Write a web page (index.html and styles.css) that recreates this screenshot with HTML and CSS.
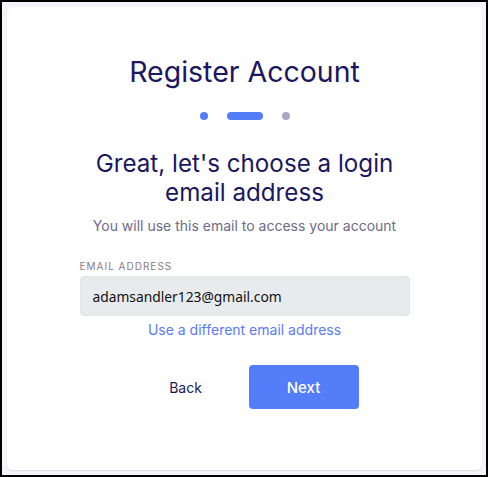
FILE: index.html
```html
<!DOCTYPE html>
<html>
<head>
<meta charset="utf-8">
<link rel="stylesheet" href="styles.css">
</head>
<body>
<div class="frame">
  <div class="card">
    <h1 class="title">Register Account</h1>
    <div class="steps">
      <span class="dot dot-done"></span>
      <span class="bar"></span>
      <span class="dot dot-todo"></span>
    </div>
    <h2 class="heading">Great, let's choose a login email address</h2>
    <p class="desc">You will use this email to access your account</p>
    <div class="field">
      <label class="label">EMAIL ADDRESS</label>
      <div class="input">adamsandler123@gmail.com</div>
    </div>
    <a class="link">Use a different email address</a>
    <div class="actions">
      <button class="btn btn-back">Back</button>
      <button class="btn btn-next">Next</button>
    </div>
  </div>
</div>
</body>
</html>
```
FILE: styles.css
```css
* { box-sizing: border-box; }
html, body { margin: 0; padding: 0; }
body {
  width: 488px;
  height: 477px;
  font-family: Inter, "Liberation Sans", sans-serif;
  background: #000;
}
.frame {
  width: 488px;
  height: 477px;
  border: 2px solid #000;
  background: #f4f4f9;
  padding: 5px 4px 5px 5px;
}
.card {
  height: 100%;
  background: #fff;
  border-radius: 6px;
  box-shadow: 0 1px 2px rgba(40, 40, 90, 0.12);
  display: flex;
  flex-direction: column;
  align-items: center;
  padding-top: 48px;
}
.title {
  margin: 0;
  font-size: 28.5px;
  line-height: 34px;
  font-weight: 400;
  color: #1b1760;
}
.steps {
  display: flex;
  align-items: center;
  gap: 19px;
  margin-top: 23px;
  height: 8px;
}
.dot {
  width: 8px;
  height: 8px;
  border-radius: 50%;
}
.dot-done { background: #537df9; }
.dot-todo { background: #a9a8c4; }
.bar {
  width: 36px;
  height: 8px;
  border-radius: 4px;
  background: #537df9;
}
.heading {
  margin: 29px 0 0;
  width: 340px;
  text-align: center;
  font-size: 24.2px;
  line-height: 29px;
  font-weight: 400;
  color: #1b1760;
}
.desc {
  margin: 10px 0 0;
  font-size: 14px;
  line-height: 18px;
  color: #6e6b88;
}
.field {
  margin-top: 25px;
  width: 330px;
  display: flex;
  flex-direction: column;
}
.label {
  font-size: 10px;
  line-height: 12px;
  letter-spacing: 1px;
  color: #8a7b85;
  margin-bottom: 4px;
}
.input {
  height: 40px;
  background: #e8ebee;
  border: 1px solid #e1e4e8;
  border-radius: 4px;
  padding: 0 12px;
  display: flex;
  align-items: center;
  font-family: "Noto Sans", sans-serif;
  font-size: 13.8px;
  color: #111;
}
.link {
  margin-top: 5px;
  font-size: 14px;
  line-height: 18px;
  color: #5a7cf7;
  cursor: pointer;
}
.actions {
  margin-top: 26px;
  display: flex;
  gap: 8px;
}
.btn {
  width: 110px;
  height: 44px;
  border: none;
  border-radius: 4px;
  font-family: Inter, "Liberation Sans", sans-serif;
  font-size: 14px;
  cursor: pointer;
}
.btn-back {
  background: transparent;
  color: #1b1760;
}
.btn-next {
  background: #537df9;
  color: #fff;
  font-size: 15px;
  font-weight: 500;
}
```
